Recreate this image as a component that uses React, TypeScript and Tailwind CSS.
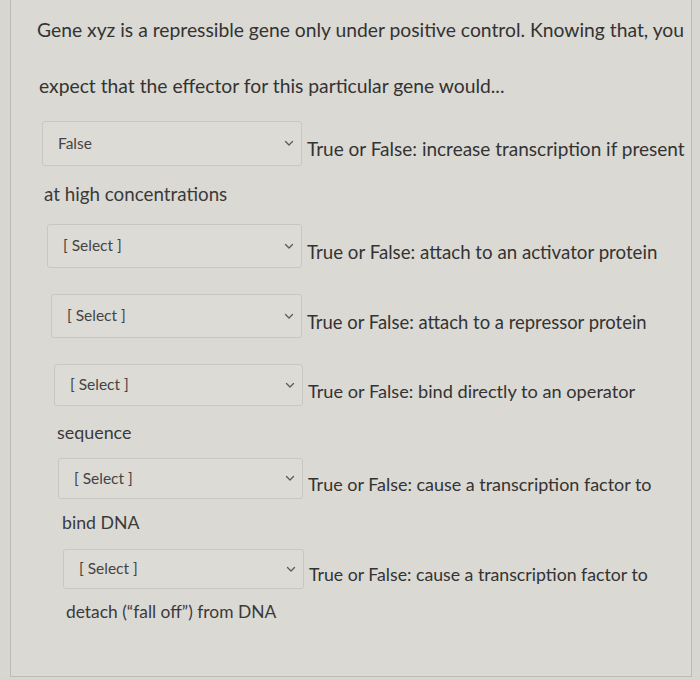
import React from 'react';

type Row = {
  box: string;
  label: string;
  labelSize: string;
  value: string;
  mt: string;
  after?: string;
  afterClass?: string;
};

const rows: Row[] = [
  { box: 'ml-[41px] w-[260px] h-[45px]', value: 'False', label: 'True or False: increase transcription if present', labelSize: 'text-[19px]', mt: 'mt-[21px]', after: 'at high concentrations', afterClass: 'ml-[43px] mt-[18px] text-[18.8px]' },
  { box: 'ml-[46px] w-[255px] h-[44px]', value: '[ Select ]', label: 'True or False: attach to an activator protein', labelSize: 'text-[18.7px]', mt: 'mt-[20px]' },
  { box: 'ml-[50px] w-[251px] h-[44px]', value: '[ Select ]', label: 'True or False: attach to a repressor protein', labelSize: 'text-[18.45px]', mt: 'mt-[26px]' },
  { box: 'ml-[53px] w-[249px] h-[42px]', value: '[ Select ]', label: 'True or False: bind directly to an operator', labelSize: 'text-[18.2px]', mt: 'mt-[26px]', after: 'sequence', afterClass: 'ml-[56px] mt-[16px] text-[17.9px]' },
  { box: 'ml-[57px] w-[245px] h-[41px]', value: '[ Select ]', label: 'True or False: cause a transcription factor to', labelSize: 'text-[17.95px]', mt: 'mt-[16px]', after: 'bind DNA', afterClass: 'ml-[61px] mt-[14px] text-[17.7px]' },
  { box: 'ml-[62px] w-[241px] h-[40px]', value: '[ Select ]', label: 'True or False: cause a transcription factor to', labelSize: 'text-[17.7px]', mt: 'mt-[16px]', after: 'detach (\u201cfall off\u201d) from DNA', afterClass: 'ml-[65px] mt-[13px] text-[17.4px]' },
];

const Chevron = () => (
  <svg width="10" height="7" viewBox="0 0 10 7" fill="none" stroke="#5a5a5a" strokeWidth="1.3" strokeLinecap="round" strokeLinejoin="round">
    <path d="M1.5 1.5 L5 5 L8.5 1.5" />
  </svg>
);

const SelectRow: React.FC<{ row: Row }> = ({ row }) => (
  <div className={row.mt}>
    <div className="flex items-center">
      <div className={`${row.box} flex items-center justify-between border border-[#c9c7c2] rounded-[3px] bg-[#dddbd6] pl-[15px] pr-[7px] shrink-0`}>
        <span className="text-[15.5px] text-[#444]">{row.value}</span>
        <Chevron />
      </div>
      <span className={`${row.labelSize} ml-[5px] mt-[11px] leading-[24px] text-[#333] whitespace-nowrap`}>{row.label}</span>
    </div>
    {row.after && (
      <div className={`${row.afterClass} leading-[20px] text-[#3a3a3a] whitespace-nowrap`}>{row.after}</div>
    )}
  </div>
);

export default function App() {
  return (
    <div className="w-[700px] h-[679px] overflow-hidden bg-[#d8d6d1] font-['Lato','Liberation_Sans',sans-serif]">
      <div className="ml-[10px] mr-[8px] h-[677px] border-l border-r border-b border-[#bdbbb6] bg-[#dbd9d4] pt-[16px]">
        <p className="ml-[26px] text-[19.3px] leading-[28px] text-[#333] whitespace-nowrap">
          Gene xyz is a repressible gene only under positive control. Knowing that, you
        </p>
        <p className="ml-[28px] mt-[28px] text-[19.3px] leading-[28px] text-[#333] whitespace-nowrap">
          expect that the effector for this particular gene would...
        </p>
        <div className="-ml-[10px]">
          {rows.map((r, i) => (
            <SelectRow key={i} row={r} />
          ))}
        </div>
      </div>
    </div>
  );
}
